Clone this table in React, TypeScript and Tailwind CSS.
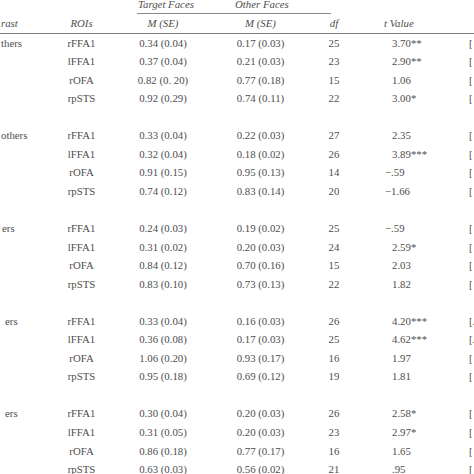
import React from "react";

type Row = { roi: string; t: string; o: string; df: string; tv: string; br?: string };
type Group = { label: React.ReactNode; rows: Row[] };

const groups: Group[] = [
  {
    label: <span className="pl-[1px]">thers</span>,
    rows: [
      { roi: "rFFA1", t: "0.34 (0.04)", o: "0.17 (0.03)", df: "25", tv: "3.70**" },
      { roi: "lFFA1", t: "0.37 (0.04)", o: "0.21 (0.03)", df: "23", tv: "2.90**" },
      { roi: "rOFA", t: "0.82 (0. 20)", o: "0.77 (0.18)", df: "15", tv: "1.06" },
      { roi: "rpSTS", t: "0.92 (0.29)", o: "0.74 (0.11)", df: "22", tv: "3.00*" },
    ],
  },
  {
    label: <span className="pl-[1px]">others</span>,
    rows: [
      { roi: "rFFA1", t: "0.33 (0.04)", o: "0.22 (0.03)", df: "27", tv: "2.35" },
      { roi: "lFFA1", t: "0.32 (0.04)", o: "0.18 (0.02)", df: "26", tv: "3.89***" },
      { roi: "rOFA", t: "0.91 (0.15)", o: "0.95 (0.13)", df: "14", tv: "−.59" },
      { roi: "rpSTS", t: "0.74 (0.12)", o: "0.83 (0.14)", df: "20", tv: "−1.66" },
    ],
  },
  {
    label: <span className="pl-[2px]">ers</span>,
    rows: [
      { roi: "rFFA1", t: "0.24 (0.03)", o: "0.19 (0.02)", df: "25", tv: "−.59" },
      { roi: "lFFA1", t: "0.31 (0.02)", o: "0.20 (0.03)", df: "24", tv: "2.59*" },
      { roi: "rOFA", t: "0.84 (0.12)", o: "0.70 (0.16)", df: "15", tv: "2.03" },
      { roi: "rpSTS", t: "0.83 (0.10)", o: "0.73 (0.13)", df: "22", tv: "1.82" },
    ],
  },
  {
    label: <span className="pl-[5px]">ers</span>,
    rows: [
      { roi: "rFFA1", t: "0.33 (0.04)", o: "0.16 (0.03)", df: "26", tv: "4.20***", br: "[." },
      { roi: "lFFA1", t: "0.36 (0.08)", o: "0.17 (0.03)", df: "25", tv: "4.62***", br: "[." },
      { roi: "rOFA", t: "1.06 (0.20)", o: "0.93 (0.17)", df: "16", tv: "1.97" },
      { roi: "rpSTS", t: "0.95 (0.18)", o: "0.69 (0.12)", df: "19", tv: "1.81" },
    ],
  },
  {
    label: <span className="pl-[5px]">ers</span>,
    rows: [
      { roi: "rFFA1", t: "0.30 (0.04)", o: "0.20 (0.03)", df: "26", tv: "2.58*" },
      { roi: "lFFA1", t: "0.31 (0.05)", o: "0.20 (0.03)", df: "23", tv: "2.97*" },
      { roi: "rOFA", t: "0.86 (0.18)", o: "0.77 (0.17)", df: "16", tv: "1.65" },
      { roi: "rpSTS", t: "0.63 (0.03)", o: "0.56 (0.02)", df: "21", tv: ".95" },
    ],
  },
];

const gridCols = "grid grid-cols-[50px_63px_100px_95px_52px_84px_30px]";

function DataRow({ label, r }: { label?: React.ReactNode; r: Row }) {
  const neg = r.tv.startsWith("−");
  return (
    <div className={`${gridCols} h-[18.55px] leading-[18.55px] whitespace-nowrap`}>
      <div className="overflow-hidden">{label}</div>
      <div className="text-center">{r.roi}</div>
      <div className="text-center">{r.t}</div>
      <div className="text-center">{r.o}</div>
      <div className="text-center">{r.df}</div>
      <div className="pl-[32px]">
        <span className={neg ? "ml-[-7px]" : ""}>{r.tv}</span>
      </div>
      <div className="pl-[25px] overflow-hidden">{r.br ?? "["}</div>
    </div>
  );
}

export default function App() {
  return (
    <div
      className="w-[474px] h-[474px] overflow-hidden bg-white text-[#4e4e4e] text-[10.8px]"
      style={{ fontFamily: '"Liberation Serif", "Times New Roman", serif' }}
    >
      {/* header row 1 */}
      <div className="h-[19px] mt-[-5px] italic">
        <div className="ml-[137px] w-[194px] h-full border-b border-[#8a8a8a] flex leading-[18px] whitespace-nowrap">
          <div className="w-[98px] pl-[1px]">Target Faces</div>
          <div>Other Faces</div>
        </div>
      </div>
      {/* header row 2 */}
      <div
        className={`${gridCols} h-[19.5px] leading-[18px] border-b-[1.5px] border-[#7c7c7c] italic whitespace-nowrap`}
      >
        <div className="overflow-hidden pl-[1px]">rast</div>
        <div className="text-center">ROIs</div>
        <div className="text-center">M (SE)</div>
        <div className="text-center">M (SE)</div>
        <div className="text-center">df</div>
        <div className="pl-[24px]">t Value</div>
        <div />
      </div>
      {/* body */}
      <div className="flex flex-col">
        {groups.map((g, gi) => (
          <div key={gi} className="flex flex-col">
            {g.rows.map((r, ri) => (
              <DataRow key={ri} label={ri === 0 ? g.label : undefined} r={r} />
            ))}
            <div className="h-[18.55px]" />
          </div>
        ))}
      </div>
    </div>
  );
}
